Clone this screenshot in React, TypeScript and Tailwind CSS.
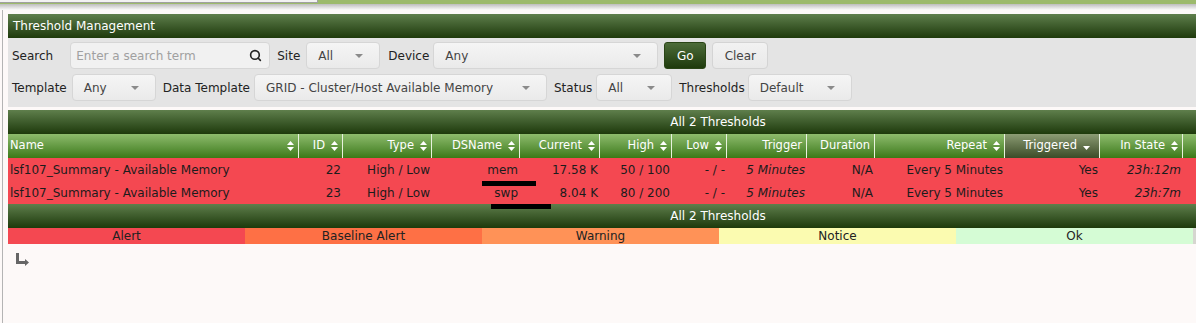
import React from "react";
import { Search } from "lucide-react";

const SortIcon = () => (
  <svg width="7" height="10" viewBox="0 0 7 10" className="shrink-0">
    <path d="M3.5 0 L7 4 L0 4 Z" fill="#ffffff" />
    <path d="M0 6 L7 6 L3.5 10 Z" fill="#ffffff" />
  </svg>
);

const Caret = () => (
  <svg width="7" height="4" viewBox="0 0 7 4" className="shrink-0 mt-[4px]">
    <path d="M0 0 L7 0 L3.5 4 Z" fill="#ffffff" />
  </svg>
);

const SelectBox = ({ value, width }: { value: string; width: string }) => (
  <div
    className={`${width} h-[27px] flex items-center justify-between pl-[11px] pr-[16px] rounded-[4px] border border-[#d6d6d6] bg-gradient-to-b from-[#f5f5f5] to-[#eaeaea] text-[#444]`}
  >
    <span>{value}</span>
    <svg width="8" height="4" viewBox="0 0 8 4">
      <path d="M0 0 L8 0 L4 4 Z" fill="#8a8a8a" />
    </svg>
  </div>
);

const columns = [
  { label: "Name", align: "left", sort: true },
  { label: "ID", sort: true },
  { label: "Type", sort: true },
  { label: "DSName", sort: true },
  { label: "Current", sort: true },
  { label: "High", sort: true },
  { label: "Low", sort: true },
  { label: "Trigger", sort: false },
  { label: "Duration", sort: false },
  { label: "Repeat", sort: true },
  { label: "Triggered", sort: false, active: true },
  { label: "In State", sort: true },
];

const rows = [
  ["lsf107_Summary - Available Memory", "22", "High / Low", "mem", "17.58 K", "50 / 100", "- / -", "5 Minutes", "N/A", "Every 5 Minutes", "Yes", "23h:12m"],
  ["lsf107_Summary - Available Memory", "23", "High / Low", "swp", "8.04 K", "80 / 200", "- / -", "5 Minutes", "N/A", "Every 5 Minutes", "Yes", "23h:7m"],
];

const legend = [
  { label: "Alert", bg: "bg-[#f44851]" },
  { label: "Baseline Alert", bg: "bg-[#fe7045]" },
  { label: "Warning", bg: "bg-[#ff9257]" },
  { label: "Notice", bg: "bg-[#fbfbb0]" },
  { label: "Ok", bg: "bg-[#d5fcd5]" },
];

const gridCols =
  "grid grid-cols-[291px_44px_89px_88px_80px_72px_55px_80px_68px_130px_95px_83px_1fr]";

export default function App() {
  return (
    <div className="min-h-screen w-full overflow-hidden bg-[#fdf9f8] font-['DejaVu_Sans',sans-serif] text-[12px] text-[#222]">
      {/* top strip */}
      <div className="h-[4px] bg-[#9cba6c] flex">
        <div className="w-[318px] h-[3px] bg-[#f2f2f2] border-b border-r border-[#a0a0a0]" />
      </div>
      <div className="h-[6px] bg-gradient-to-b from-[#bdbdbd] to-[#fbfbfb]" />

      <div className="ml-[2px] border-l border-[#b4b4b4] pl-[5px] pt-[4px] min-h-[313px]">
        <div className="w-[1420px]">
          {/* title */}
          <div className="h-[24px] flex items-center pl-[5px] text-white bg-gradient-to-b from-[#5f7f4c] to-[#1e3a0b]">
            Threshold Management
          </div>

          {/* filters */}
          <div className="bg-[#e4e4e4] pl-[4px] pt-[4px] pb-[6px] flex flex-col gap-[5px]">
            <div className="flex items-center gap-[7px]">
              <div className="flex items-center gap-[17px]">
                <span>Search</span>
                <div className="w-[200px] h-[27px] flex items-center justify-between pl-[5px] pr-[7px] rounded-[4px] border border-[#d6d6d6] bg-[#f1f1f1]">
                  <span className="text-[#a0a0a0]">Enter a search term</span>
                  <Search size={13} strokeWidth={3} color="#222" />
                </div>
              </div>
              <div className="flex items-center gap-[6px]">
                <span>Site</span>
                <SelectBox value="All" width="w-[74px]" />
              </div>
              <div className="flex items-center gap-[4px] ml-[1px]">
                <span>Device</span>
                <SelectBox value="Any" width="w-[225px]" />
              </div>
              <button className="ml-[-1px] w-[42px] h-[27px] rounded-[3px] border border-[#2a4516] bg-gradient-to-b from-[#4d6c39] to-[#1f3b0c] text-white">
                Go
              </button>
              <button className="ml-[-1px] w-[56px] h-[27px] rounded-[4px] border border-[#d4d4d4] bg-gradient-to-b from-[#f2f2f2] to-[#e9e9e9] text-[#444]">
                Clear
              </button>
            </div>
            <div className="flex items-center gap-[7px]">
              <div className="flex items-center gap-[5px]">
                <span>Template</span>
                <SelectBox value="Any" width="w-[84px]" />
              </div>
              <div className="flex items-center gap-[4px]">
                <span>Data Template</span>
                <SelectBox value="GRID - Cluster/Host Available Memory" width="w-[293px]" />
              </div>
              <div className="flex items-center gap-[4px]">
                <span>Status</span>
                <SelectBox value="All" width="w-[76px]" />
              </div>
              <div className="flex items-center gap-[3px]">
                <span>Thresholds</span>
                <SelectBox value="Default" width="w-[104px]" />
              </div>
            </div>
          </div>

          {/* table */}
          <div className="mt-[3px] relative">
            <div className="h-[24px] flex items-center justify-center text-white bg-gradient-to-b from-[#5f7f4c] to-[#1e3a0b]">
              All 2 Thresholds
            </div>
            <div className={`${gridCols} h-[24px] text-white text-[11.5px] bg-gradient-to-b from-[#8ebc6c] to-[#3b7915]`}>
              {columns.map((c) => (
                <div
                  key={c.label}
                  className={`flex items-center border-r border-[#e8f2de] ${
                    c.align === "left" ? "justify-between pl-[2px] pr-[4px]" : "justify-end gap-[6px] pr-[4px]"
                  } ${c.active ? "bg-gradient-to-b from-[#8c9c74] to-[#3c4c28] pr-[9px]" : ""}`}
                >
                  <span>{c.label}</span>
                  {c.sort && <SortIcon />}
                  {c.active && <Caret />}
                </div>
              ))}
              <div />
            </div>
            {rows.map((r, i) => (
              <div key={i} className={`${gridCols} h-[23px] bg-[#f44851] text-[12px] text-[#1c1c1c]`}>
                {r.map((cell, j) => (
                  <div
                    key={j}
                    className={`flex items-center ${j === 0 ? "pl-[2px]" : "justify-end pr-[2px]"} ${
                      j === 7 || j === 11 ? "italic" : ""
                    }`}
                  >
                    {cell}
                  </div>
                ))}
                <div />
              </div>
            ))}
            <div className="h-[24px] flex items-center justify-center text-white bg-gradient-to-b from-[#5f7f4c] to-[#1e3a0b]">
              All 2 Thresholds
            </div>
            <div className="flex h-[16px]">
              {legend.map((l) => (
                <div key={l.label} className={`w-[237px] flex items-center justify-center ${l.bg}`}>
                  {l.label}
                </div>
              ))}
              <div className="w-[4px] bg-[#d6d6d0]" />
            </div>

            {/* redaction marks */}
            <div className="absolute left-[474px] top-[71px] w-[54px] h-[5px] bg-black" />
            <div className="absolute left-[483px] top-[94px] w-[60px] h-[5px] bg-black" />
          </div>

          <div className="pl-[8px] pt-[9px]">
            <svg width="13" height="13" viewBox="0 0 13 13">
              <path d="M0 0 H3 V8 H9 V6 L13 9.5 L9 13 V11 H0 Z" fill="#666" />
            </svg>
          </div>
        </div>
      </div>
    </div>
  );
}
